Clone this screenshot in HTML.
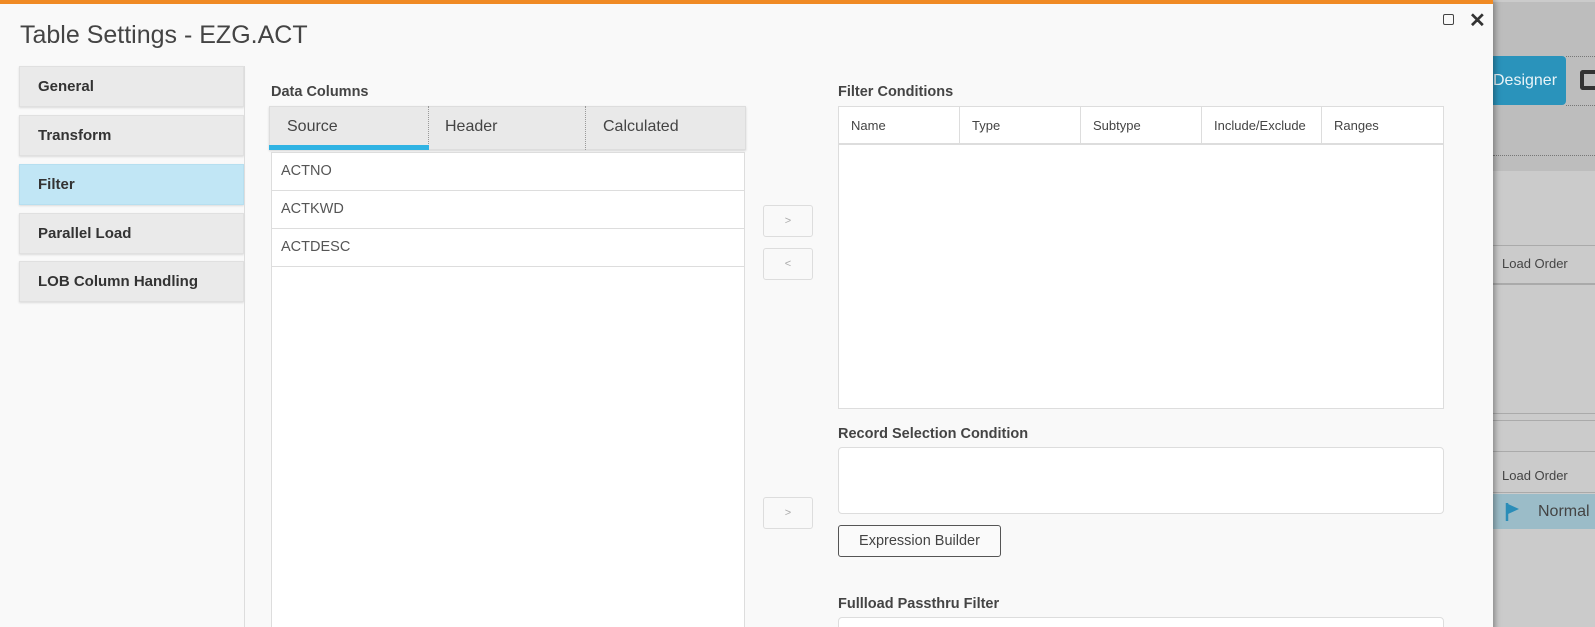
<!DOCTYPE html>
<html><head><meta charset="utf-8"><style>
*{box-sizing:border-box;margin:0;padding:0}
html,body{width:1595px;height:627px;overflow:hidden}
body{background:#cbcbcb;font-family:"Liberation Sans",sans-serif;position:relative;color:#333}
.a{position:absolute}
.bg1{left:1493px;top:2px;width:102px;height:169px;background:#bdbdbd}
.modal{left:0;top:0;width:1493px;height:640px;background:#f9f9f9;border-top:4px solid #f08a24;box-shadow:2px 0 6px rgba(0,0,0,.35)}
.side{left:19px;width:225px;height:41px;background:#eaeaea;border:1px solid #e0e0e0;box-shadow:0 1px 2px rgba(0,0,0,.12);font-weight:bold;font-size:15px;padding:11px 0 0 18px;color:#333}
.lbl{font-weight:bold;font-size:14.5px;color:#444}
.row{left:271px;width:473px;height:38px;border-bottom:1px solid #ddd;font-size:14.5px;color:#555;padding:10px 0 0 10px}
.btn{width:50px;height:32px;border:1px solid #ddd;border-radius:3px;background:#f9f9f9;color:#aaa;font-size:11px;text-align:center;line-height:30px}
.th{top:107px;height:37px;font-size:13px;color:#444;padding:11px 0 0 12px;border-right:1px solid #ddd}
</style></head><body>
<div class="a bg1"></div>
<div class="a" style="left:1493px;top:56px;width:73px;height:49px;background:#2a93bb;border-radius:0 4px 4px 0;color:#e8f4f8;font-size:16px;padding:16px 0 0 0">Designer</div>
<div class="a" style="left:1580px;top:70px;width:15px;height:20px;border:4px solid #333;border-right:none;border-radius:3px 0 0 3px"></div>
<div class="a" style="left:1566px;top:56px;width:29px;border-top:1px dotted #777"></div>
<div class="a" style="left:1566px;top:105px;width:29px;border-top:1px dotted #777"></div>
<div class="a" style="left:1493px;top:155px;width:102px;border-top:1px dotted #777"></div>
<div class="a" style="left:1493px;top:245px;width:102px;border-top:1px solid #aaa"></div>
<div class="a" style="left:1502px;top:256px;font-size:13px;color:#444">Load Order</div>
<div class="a" style="left:1493px;top:283px;width:102px;border-top:2px solid #aaa"></div>
<div class="a" style="left:1493px;top:413px;width:102px;border-top:1px solid #aaa"></div>
<div class="a" style="left:1493px;top:420px;width:102px;border-top:1px solid #aaa"></div>
<div class="a" style="left:1493px;top:451px;width:102px;border-top:1px solid #aaa"></div>
<div class="a" style="left:1502px;top:468px;font-size:13px;color:#444">Load Order</div>
<div class="a" style="left:1493px;top:492px;width:102px;height:1px;background:#aaa"></div>
<div class="a" style="left:1493px;top:494px;width:102px;height:35px;background:#9bbcc8"></div>
<svg class="a" style="left:1505px;top:502px" width="16" height="20"><path d="M2 1v18" stroke="#2a8db8" stroke-width="2.5"/><path d="M3 2l11 5-11 5z" fill="#2a8db8"/></svg>
<div class="a" style="left:1538px;top:503px;font-size:16px;color:#444">Normal</div>

<div class="a modal"></div>
<div class="a" style="left:20px;top:21px;font-size:25px;color:#444">Table Settings - EZG.ACT</div>
<div class="a" style="left:1443px;top:14px;width:11px;height:11px;border:1.5px solid #444;border-radius:2px"></div>
<div class="a" style="left:1469px;top:8px;font-size:20px;font-weight:bold;color:#333">✕</div>

<div class="a side" style="top:66px">General</div>
<div class="a side" style="top:115px">Transform</div>
<div class="a side" style="top:164px;background:#c1e6f5;border-color:#b6dff0">Filter</div>
<div class="a side" style="top:213px">Parallel Load</div>
<div class="a side" style="top:261px">LOB Column Handling</div>
<div class="a" style="left:244px;top:66px;width:1px;height:561px;background:#ddd"></div>

<div class="a lbl" style="left:271px;top:84px">Data Columns</div>
<div class="a" style="left:269px;top:106px;width:477px;height:44px;background:#e9e9e9;border:1px solid #ddd;box-shadow:0 1px 2px rgba(0,0,0,.15)"></div>
<div class="a" style="left:428px;top:106px;height:44px;border-left:1px dotted #999"></div>
<div class="a" style="left:585px;top:106px;height:44px;border-left:1px dotted #999"></div>
<div class="a" style="left:269px;top:145px;width:160px;height:5px;background:#30b3e3"></div>
<div class="a" style="left:287px;top:118px;font-size:16px;color:#444">Source</div>
<div class="a" style="left:445px;top:118px;font-size:16px;color:#444">Header</div>
<div class="a" style="left:603px;top:118px;font-size:16px;color:#444">Calculated</div>
<div class="a" style="left:271px;top:152px;width:474px;height:490px;background:#fff;border:1px solid #ddd"></div>
<div class="a row" style="top:153px">ACTNO</div>
<div class="a row" style="top:191px">ACTKWD</div>
<div class="a row" style="top:229px">ACTDESC</div>

<div class="a btn" style="left:763px;top:205px">&gt;</div>
<div class="a btn" style="left:763px;top:248px">&lt;</div>
<div class="a btn" style="left:763px;top:497px">&gt;</div>

<div class="a lbl" style="left:838px;top:84px">Filter Conditions</div>
<div class="a" style="left:838px;top:106px;width:606px;height:303px;background:#fff;border:1px solid #ddd"></div>
<div class="a" style="left:839px;top:143px;width:604px;height:2px;background:#ddd"></div>
<div class="a th" style="left:839px;width:121px">Name</div>
<div class="a th" style="left:960px;width:121px">Type</div>
<div class="a th" style="left:1081px;width:121px">Subtype</div>
<div class="a th" style="left:1202px;width:120px">Include/Exclude</div>
<div class="a th" style="left:1322px;width:120px;border:none">Ranges</div>

<div class="a lbl" style="left:838px;top:426px">Record Selection Condition</div>
<div class="a" style="left:838px;top:447px;width:606px;height:67px;background:#fff;border:1px solid #ddd;border-radius:4px"></div>
<div class="a" style="left:838px;top:525px;width:163px;height:32px;border:1px solid #555;border-radius:3px;background:#fafafa;font-size:14.5px;color:#444;text-align:center;line-height:30px">Expression Builder</div>
<div class="a lbl" style="left:838px;top:596px">Fullload Passthru Filter</div>
<div class="a" style="left:838px;top:617px;width:606px;height:30px;background:#fff;border:1px solid #ddd;border-radius:4px"></div>
</body></html>
